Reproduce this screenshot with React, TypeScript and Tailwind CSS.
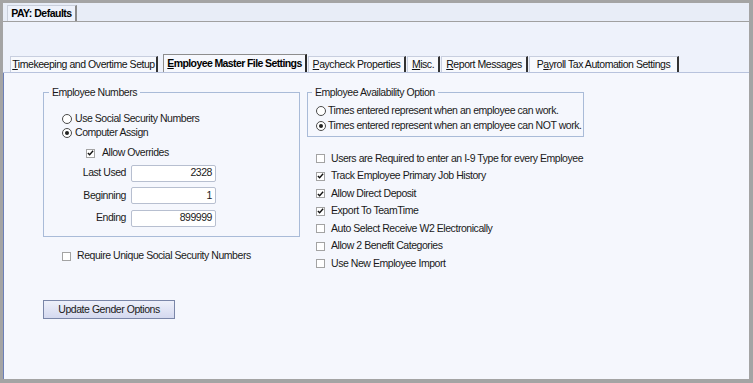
import React from "react";

const FONT = { fontFamily: '"Liberation Sans", Arial, sans-serif' };

function Radio({ checked }: { checked?: boolean }) {
  return (
    <span className="flex h-[10px] w-[10px] shrink-0 items-center justify-center rounded-full border border-[#4a4a4a] bg-white">
      {checked && <span className="h-[4px] w-[4px] rounded-full bg-[#222]" />}
    </span>
  );
}

function Check({ checked }: { checked?: boolean }) {
  return (
    <span className="flex h-[9px] w-[9px] shrink-0 items-center justify-center border border-[#a3a3a3] bg-white">
      {checked && (
        <svg viewBox="0 0 8 8" className="h-[8px] w-[8px]">
          <path d="M1 4 L3 6 L7 1.5" fill="none" stroke="#111" strokeWidth="1.6" />
        </svg>
      )}
    </span>
  );
}

function Tab({ children, selected, w }: { children: React.ReactNode; selected?: boolean; w: string }) {
  if (selected) {
    return (
      <div className={`${w} flex h-[18px] items-center justify-center overflow-hidden border-l border-t border-[#8d8d8d] border-r-2 border-r-[#2a2a2a] bg-[#f6f8fd] font-bold tracking-[-0.6px] text-[#000]`}>
        {children}
      </div>
    );
  }
  return (
    <div className={`${w} flex h-[16px] items-center justify-center overflow-hidden border-l border-t border-[#c8cfdf] border-r-2 border-r-[#333] bg-[#f7f9fd] text-[#111]`}>
      {children}
    </div>
  );
}

function NumberRow({ label, value }: { label: string; value: string }) {
  return (
    <div className="flex h-[17px] items-center">
      <span className="w-[69px] pr-[5px] text-right">{label}</span>
      <div className="flex h-[17px] w-[85px] items-center justify-end rounded-[2px] border border-[#b7bfd0] bg-white pr-[3px]">
        {value}
      </div>
    </div>
  );
}

export default function App() {
  const checks: [string, boolean][] = [
    ["Users are Required to enter an I-9 Type for every Employee", false],
    ["Track Employee Primary Job History", true],
    ["Allow Direct Deposit", true],
    ["Export To TeamTime", true],
    ["Auto Select Receive W2 Electronically", false],
    ["Allow 2 Benefit Categories", false],
    ["Use New Employee Import", false],
  ];

  return (
    <div
      style={FONT}
      className="flex h-[383px] w-[753px] flex-col whitespace-nowrap border-b-[4px] border-l-[3px] border-r-[4px] border-t-[3px] border-[#a4a4a4] text-[10.5px] tracking-[-0.45px] text-[#1a1a1a]"
    >
      {/* top strip */}
      <div className="flex h-[19px] items-end border-b border-[#a0a0a0] bg-[#e8edf7] pl-[4px]">
        <div className="flex h-[16px] w-[70px] items-center justify-center border-l border-t border-[#c9cfdb] border-r-2 border-r-[#8a8a8a] bg-[#eef2fb] font-bold tracking-[-0.5px] text-black">
          PAY: Defaults
        </div>
      </div>

      {/* tab row */}
      <div className="flex h-[51px] items-end border-b border-[#b8c3dd] bg-[#eef2fb] pl-[7px]">
        <Tab w="w-[148px]">
          <span><u>T</u>imekeeping and Overtime Setup</span>
        </Tab>
        <div className="ml-[5px]">
          <Tab w="w-[144px]" selected>
            <span><u>E</u>mployee Master File Settings</span>
          </Tab>
        </div>
        <div className="ml-[1px]">
          <Tab w="w-[98px]">
            <span><u>P</u>aycheck Properties</span>
          </Tab>
        </div>
        <div className="ml-[1px]">
          <Tab w="w-[33px]">
            <span><u>M</u>isc.</span>
          </Tab>
        </div>
        <div className="ml-[1px]">
          <Tab w="w-[87px]">
            <span><u>R</u>eport Messages</span>
          </Tab>
        </div>
        <div className="ml-[1px]">
          <Tab w="w-[150px]">
            <span>P<u>a</u>yroll Tax Automation Settings</span>
          </Tab>
        </div>
      </div>

      {/* content */}
      <div className="flex flex-1 border-l border-[#6b7fb8] bg-[#f5f7fd]">
        {/* left column */}
        <div className="ml-[39px] mt-[12px] flex w-[257px] flex-col">
          <fieldset className="h-[152px] border border-[#a9bbd8] pl-[18px] pt-[11px]">
            <legend className="-ml-[13px] px-[3px] text-[#1a1a1a]">Employee Numbers</legend>
            <div className="flex h-[14px] items-center gap-[3px]">
              <Radio />
              <span>Use Social Security Numbers</span>
            </div>
            <div className="flex h-[14px] items-center gap-[3px]">
              <Radio checked />
              <span>Computer Assign</span>
            </div>
            <div className="ml-[24px] mt-[6px] flex h-[15px] items-center gap-[7px]">
              <Check checked />
              <span>Allow Overrides</span>
            </div>
            <div className="mt-[4px] flex flex-col gap-[5.5px]">
              <NumberRow label="Last Used" value="2328" />
              <NumberRow label="Beginning" value="1" />
              <NumberRow label="Ending" value="899999" />
            </div>
          </fieldset>

          <div className="ml-[19px] mt-[12px] flex h-[14px] items-center gap-[6px]">
            <Check />
            <span>Require Unique Social Security Numbers</span>
          </div>

          <button
            style={FONT}
            className="mt-[37px] h-[19px] w-[132px] border border-[#7a86a8] bg-gradient-to-b from-[#eef0fa] to-[#d4d9ef] text-[10.5px] tracking-[-0.45px] text-[#1a1a1a]"
          >
            Update Gender Options
          </button>
        </div>

        {/* right column */}
        <div className="ml-[7px] mt-[12px] flex flex-col">
          <fieldset className="h-[52px] w-[277px] border border-[#a9bbd8] pl-[8px] pt-[3px]">
            <legend className="-ml-[4px] px-[3px] text-[#1a1a1a]">Employee Availability Option</legend>
            <div className="flex h-[15px] items-center gap-[2px]">
              <Radio />
              <span>Times entered represent when an employee can work.</span>
            </div>
            <div className="flex h-[15px] items-center gap-[2px]">
              <Radio checked />
              <span>Times entered represent when an employee can NOT work.</span>
            </div>
          </fieldset>

          <div className="ml-[9px] mt-[13px] flex flex-col">
            {checks.map(([label, on]) => (
              <div key={label} className="flex h-[17.5px] items-center gap-[6px]">
                <Check checked={on} />
                <span>{label}</span>
              </div>
            ))}
          </div>
        </div>
      </div>
    </div>
  );
}
